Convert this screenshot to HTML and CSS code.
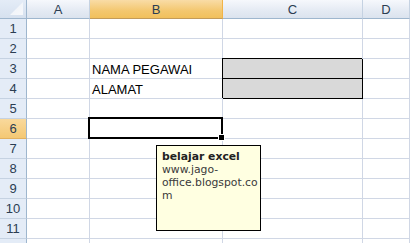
FILE: index.html
```html
<!DOCTYPE html>
<html lang="id">
<head>
    <meta charset="UTF-8">
    <title>Lembar Kerja</title>
    <link rel="stylesheet" href="styles.css">
</head>
<body>
    <div class="sheet">
        <div class="corner"></div>
        <div class="colhead">A</div>
        <div class="colhead active">B</div>
        <div class="colhead">C</div>
        <div class="colhead">D</div>

        <div class="rowhead">1</div><div class="cell"></div><div class="cell"></div><div class="cell"></div><div class="cell"></div>
        <div class="rowhead">2</div><div class="cell"></div><div class="cell"></div><div class="cell"></div><div class="cell"></div>
        <div class="rowhead">3</div><div class="cell"></div><div class="cell">NAMA PEGAWAI</div><div class="cell shaded"></div><div class="cell"></div>
        <div class="rowhead">4</div><div class="cell"></div><div class="cell">ALAMAT</div><div class="cell shaded"></div><div class="cell"></div>
        <div class="rowhead">5</div><div class="cell"></div><div class="cell"></div><div class="cell"></div><div class="cell"></div>
        <div class="rowhead active">6</div><div class="cell"></div><div class="cell selected"></div><div class="cell"></div><div class="cell"></div>
        <div class="rowhead">7</div><div class="cell"></div><div class="cell"></div><div class="cell"></div><div class="cell"></div>
        <div class="rowhead">8</div><div class="cell"></div><div class="cell"></div><div class="cell"></div><div class="cell"></div>
        <div class="rowhead">9</div><div class="cell"></div><div class="cell"></div><div class="cell"></div><div class="cell"></div>
        <div class="rowhead">10</div><div class="cell"></div><div class="cell"></div><div class="cell"></div><div class="cell"></div>
        <div class="rowhead">11</div><div class="cell"></div><div class="cell"></div><div class="cell"></div><div class="cell"></div>
        <div class="rowhead"></div><div class="cell"></div><div class="cell"></div><div class="cell"></div><div class="cell"></div>

        <!-- komentar sel B6 -->
        <div class="comment">
            <b>belajar excel</b><br>
            www.jago-<br>office.blogspot.co<br>m
        </div>
    </div>
</body>
</html>
```

FILE: styles.css
```css
* {
    margin: 0;
    padding: 0;
    box-sizing: border-box;
}

body {
    background-color: #fff;
    font-family: "Liberation Sans", Arial, sans-serif;
    overflow: hidden;
}

.sheet {
    position: relative;
    display: grid;
    grid-template-columns: 27px 63px 133px 140px 1fr;
    grid-template-rows: 19px repeat(12, 20px);
    width: 410px;
    height: 243px;
    overflow: hidden;
}

.corner {
    position: relative;
    background: linear-gradient(#e4ecf7, #d6e1ef);
    border-right: 1px solid #9eb6ce;
    border-bottom: 1px solid #9eb6ce;
}

.corner::after {
    content: "";
    position: absolute;
    right: 3px;
    bottom: 3px;
    width: 13px;
    height: 13px;
    background: linear-gradient(135deg, #eef2f8, #f6f8fb);
    clip-path: polygon(100% 0, 100% 100%, 0 100%);
}

.colhead {
    display: flex;
    align-items: center;
    justify-content: center;
    background: linear-gradient(#f6f8fc, #e4eaf3 60%, #dbe3ee);
    border-right: 1px solid #c5d2e2;
    border-bottom: 1px solid #9eb6ce;
    font-size: 13px;
    color: #2b3d52;
}

.colhead.active {
    background: linear-gradient(#f9dca6, #f3c76f 60%, #f1c05c);
    border-right-color: #f2b447;
    border-bottom-color: #c29b5a;
}

.rowhead {
    display: flex;
    align-items: center;
    justify-content: center;
    background-color: #e4ecf7;
    border-right: 1px solid #9eb6ce;
    border-bottom: 1px solid #c5d2e2;
    font-size: 13px;
    color: #2b3d52;
}

.rowhead.active {
    background: linear-gradient(#f9d99c, #f4c874);
    border-bottom-color: #e2b160;
}

.cell {
    border-right: 1px solid #d0d7e5;
    border-bottom: 1px solid #d0d7e5;
    padding: 3px 0 0 2px;
    font-size: 13px;
    line-height: 15px;
    color: #000;
    white-space: nowrap;
}

.shaded {
    background-color: #d9d9d9;
    border-right-color: #000;
    border-bottom-color: #000;
    box-shadow: -1px -1px 0 #000;
}

.selected {
    position: relative;
    z-index: 2;
}

.selected::before {
    content: "";
    position: absolute;
    top: -2px;
    left: -2px;
    right: -1px;
    bottom: -1px;
    border: 2px solid #000;
}

.selected::after {
    content: "";
    position: absolute;
    right: -3px;
    bottom: -3px;
    width: 5px;
    height: 5px;
    background-color: #000;
    border: 1px solid #fff;
}

.comment {
    position: absolute;
    left: 156px;
    top: 145px;
    width: 105px;
    height: 86px;
    z-index: 3;
    padding: 4px 0 0 5px;
    background-color: #ffffe1;
    border: 1px solid #000;
    font-family: "DejaVu Sans", Tahoma, sans-serif;
    font-size: 10.8px;
    line-height: 13px;
    color: #3a3a3a;
}

.comment b {
    color: #222;
}
```
